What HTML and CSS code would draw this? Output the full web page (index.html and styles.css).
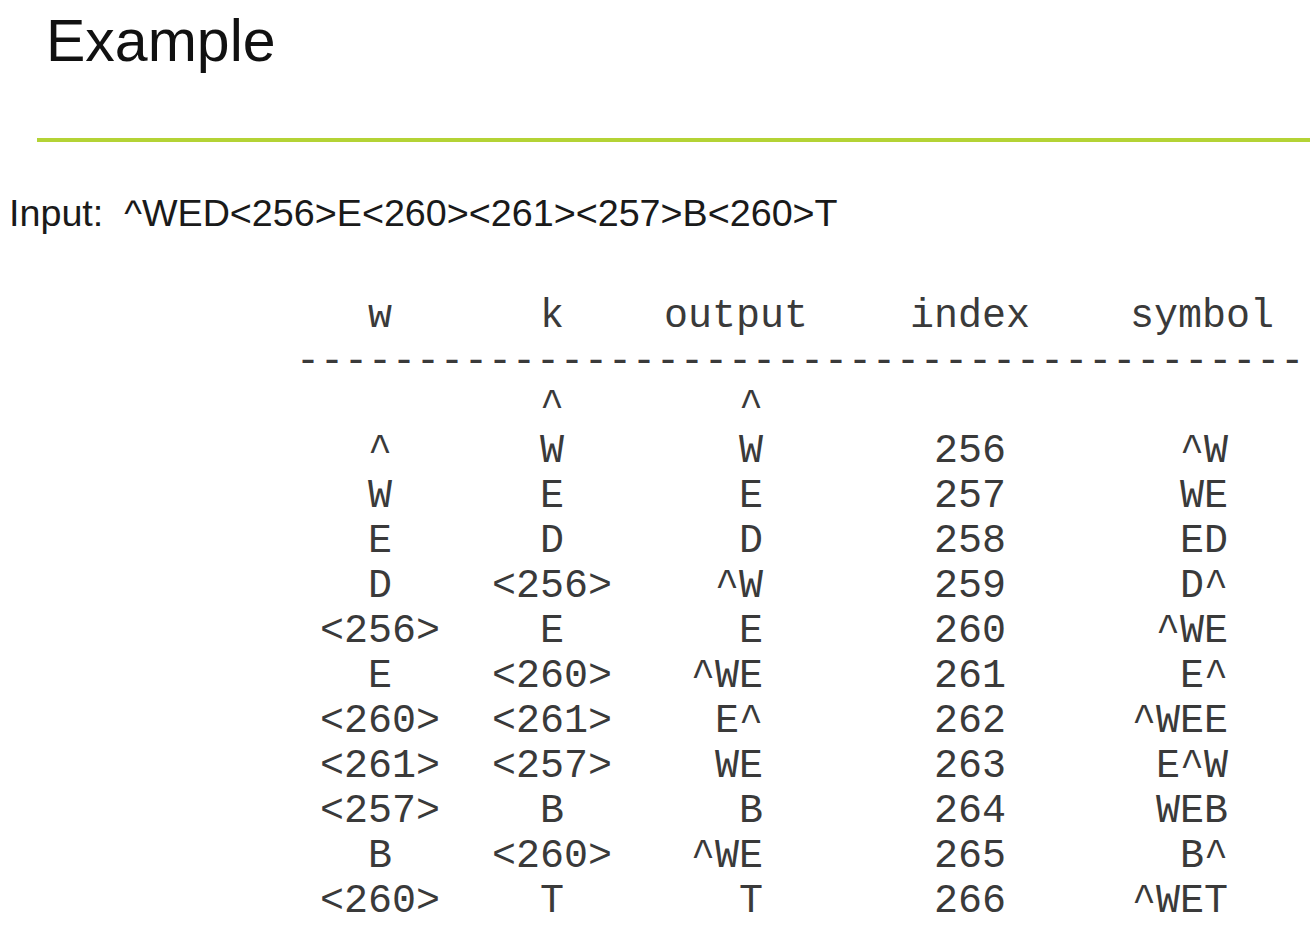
FILE: index.html
```html
<!DOCTYPE html>
<html lang="en">
<head>
<meta charset="utf-8">
<title>Example</title>
<link rel="stylesheet" href="styles.css">
</head>
<body>
<main class="slide">
  <h1 class="title">Example</h1>
  <div class="rule"></div>
  <p class="input">Input:&nbsp; ^WED&lt;256&gt;E&lt;260&gt;&lt;261&gt;&lt;257&gt;B&lt;260&gt;T</p>
  <div class="table">
    <div class="hd">w</div><div class="hd">k</div><div class="hd">output</div><div class="hd">index</div><div class="hd">symbol</div>
    <div class="dashes">------------------------------------------</div>
    <div class="c1"></div><div class="c2">^</div><div class="c3">^</div><div class="c4"></div><div class="c5"></div>
    <div class="c1">^</div><div class="c2">W</div><div class="c3">W</div><div class="c4">256</div><div class="c5">^W</div>
    <div class="c1">W</div><div class="c2">E</div><div class="c3">E</div><div class="c4">257</div><div class="c5">WE</div>
    <div class="c1">E</div><div class="c2">D</div><div class="c3">D</div><div class="c4">258</div><div class="c5">ED</div>
    <div class="c1">D</div><div class="c2">&lt;256&gt;</div><div class="c3">^W</div><div class="c4">259</div><div class="c5">D^</div>
    <div class="c1">&lt;256&gt;</div><div class="c2">E</div><div class="c3">E</div><div class="c4">260</div><div class="c5">^WE</div>
    <div class="c1">E</div><div class="c2">&lt;260&gt;</div><div class="c3">^WE</div><div class="c4">261</div><div class="c5">E^</div>
    <div class="c1">&lt;260&gt;</div><div class="c2">&lt;261&gt;</div><div class="c3">E^</div><div class="c4">262</div><div class="c5">^WEE</div>
    <div class="c1">&lt;261&gt;</div><div class="c2">&lt;257&gt;</div><div class="c3">WE</div><div class="c4">263</div><div class="c5">E^W</div>
    <div class="c1">&lt;257&gt;</div><div class="c2">B</div><div class="c3">B</div><div class="c4">264</div><div class="c5">WEB</div>
    <div class="c1">B</div><div class="c2">&lt;260&gt;</div><div class="c3">^WE</div><div class="c4">265</div><div class="c5">B^</div>
    <div class="c1">&lt;260&gt;</div><div class="c2">T</div><div class="c3">T</div><div class="c4">266</div><div class="c5">^WET</div>
  </div>
</main>
</body>
</html>
```

FILE: styles.css
```css
html, body {
  margin: 0;
  padding: 0;
  background: #ffffff;
  overflow: hidden;
}

.slide {
  width: 1310px;
  height: 942px;
  overflow: hidden;
  display: flex;
  flex-direction: column;
}

.title {
  margin: 12px 0 0 46px;
  font-family: "Liberation Sans", Arial, sans-serif;
  font-weight: normal;
  font-size: 59px;
  line-height: 58px;
  color: #111111;
}

.rule {
  margin: 68px 0 0 37px;
  height: 4px;
  background: #b4d335;
}

.input {
  margin: 50px 0 0 9px;
  font-family: "Liberation Sans", Arial, sans-serif;
  font-size: 37.7px;
  line-height: 42px;
  color: #1a1a1a;
  white-space: pre;
}

.table {
  margin: 60px 0 0 298px;
  display: grid;
  grid-template-columns: 164px 180px 188px 280px 184px;
  grid-auto-rows: 45px;
  font-family: "Liberation Mono", "Courier New", monospace;
  font-size: 40px;
  line-height: 45px;
  color: #3a3a3a;
  white-space: pre;
}

.hd {
  text-align: center;
}

.dashes {
  grid-column: 1 / -1;
  margin-left: -2px;
}

.c1, .c2, .c4 {
  text-align: center;
}

.c3 {
  text-align: right;
  padding-right: 67px;
}

.c5 {
  text-align: right;
  padding-right: 66px;
}
```
